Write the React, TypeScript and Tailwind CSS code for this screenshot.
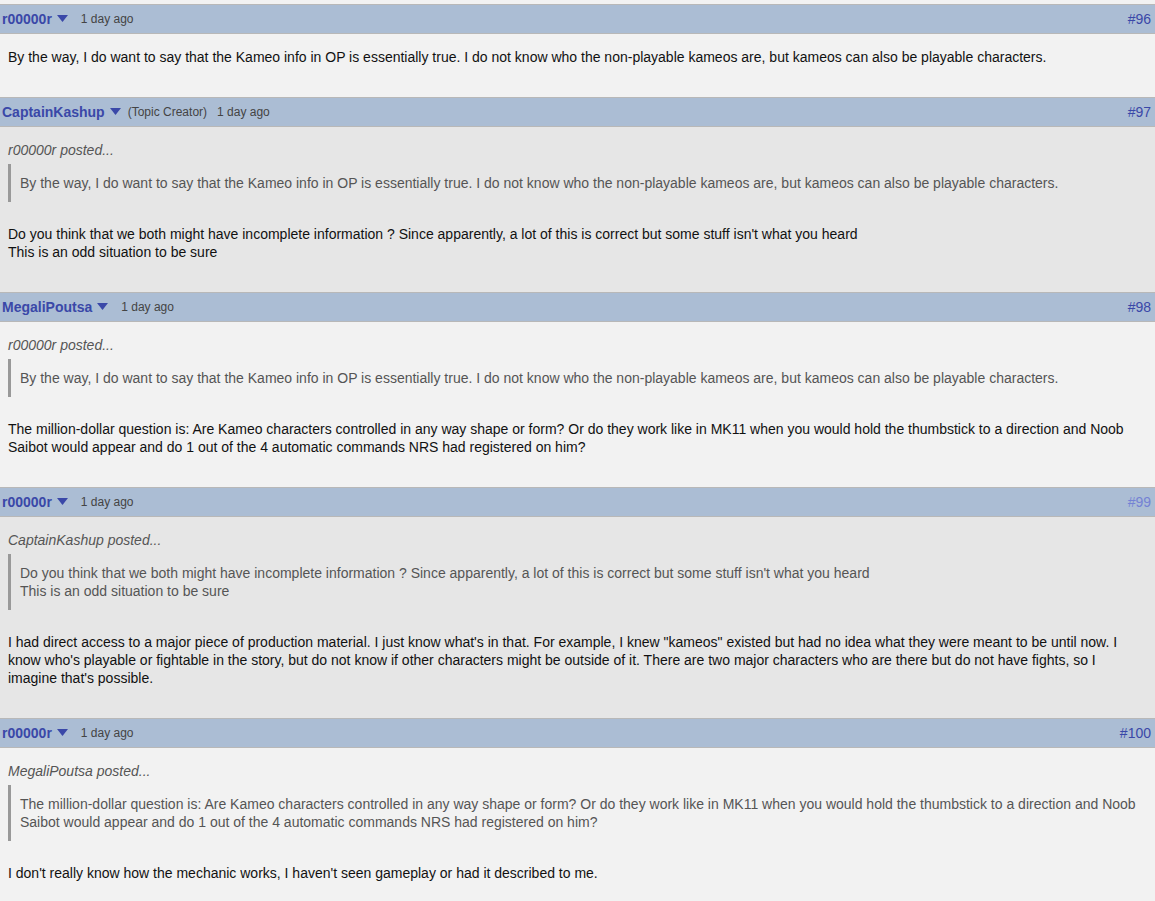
import React from 'react';

type Quote = { author: string; lines: string[] };

type Post = {
  id: number;
  user: string;
  creator?: boolean;
  ago: string;
  quote?: Quote;
  text: string[];
  visited?: boolean;
};

const posts: Post[] = [
  {
    id: 96,
    user: 'r00000r',
    ago: '1 day ago',
    text: [
      'By the way, I do want to say that the Kameo info in OP is essentially true. I do not know who the non-playable kameos are, but kameos can also be playable characters.',
    ],
  },
  {
    id: 97,
    user: 'CaptainKashup',
    creator: true,
    ago: '1 day ago',
    quote: {
      author: 'r00000r',
      lines: [
        'By the way, I do want to say that the Kameo info in OP is essentially true. I do not know who the non-playable kameos are, but kameos can also be playable characters.',
      ],
    },
    text: [
      "Do you think that we both might have incomplete information ? Since apparently, a lot of this is correct but some stuff isn't what you heard",
      'This is an odd situation to be sure',
    ],
  },
  {
    id: 98,
    user: 'MegaliPoutsa',
    ago: '1 day ago',
    quote: {
      author: 'r00000r',
      lines: [
        'By the way, I do want to say that the Kameo info in OP is essentially true. I do not know who the non-playable kameos are, but kameos can also be playable characters.',
      ],
    },
    text: [
      'The million-dollar question is: Are Kameo characters controlled in any way shape or form? Or do they work like in MK11 when you would hold the thumbstick to a direction and Noob Saibot would appear and do 1 out of the 4 automatic commands NRS had registered on him?',
    ],
  },
  {
    id: 99,
    user: 'r00000r',
    ago: '1 day ago',
    visited: true,
    quote: {
      author: 'CaptainKashup',
      lines: [
        "Do you think that we both might have incomplete information ? Since apparently, a lot of this is correct but some stuff isn't what you heard",
        'This is an odd situation to be sure',
      ],
    },
    text: [
      'I had direct access to a major piece of production material. I just know what\'s in that. For example, I knew "kameos" existed but had no idea what they were meant to be until now. I know who\'s playable or fightable in the story, but do not know if other characters might be outside of it. There are two major characters who are there but do not have fights, so I imagine that\'s possible.',
    ],
  },
  {
    id: 100,
    user: 'r00000r',
    ago: '1 day ago',
    quote: {
      author: 'MegaliPoutsa',
      lines: [
        'The million-dollar question is: Are Kameo characters controlled in any way shape or form? Or do they work like in MK11 when you would hold the thumbstick to a direction and Noob Saibot would appear and do 1 out of the 4 automatic commands NRS had registered on him?',
      ],
    },
    text: [
      "I don't really know how the mechanic works, I haven't seen gameplay or had it described to me.",
    ],
  },
];

const Caret = () => (
  <svg width="11" height="7" viewBox="0 0 11 7" className="ml-[5px] mt-[-2px]">
    <path d="M0 0 H11 L5.5 7 Z" fill="#3a48a8" />
  </svg>
);

const PostHeader: React.FC<{ post: Post }> = ({ post }) => (
  <div className="flex h-[30px] items-center border-y border-[#b8b8b8] bg-[#abbdd4] pl-[2px] pr-[4px]">
    <span className="text-[14px] font-bold text-[#3a48a8]">{post.user}</span>
    <Caret />
    {post.creator && <span className="ml-[7px] text-[12px] text-[#444]">(Topic Creator)</span>}
    <span className={`${post.creator ? 'ml-[10px]' : 'ml-[13px]'} text-[12px] text-[#444]`}>{post.ago}</span>
    <span className={`ml-auto text-[14px] ${post.visited ? 'text-[#7482d4]' : 'text-[#3a48a8]'}`}>#{post.id}</span>
  </div>
);

const PostBody: React.FC<{ post: Post; shade: boolean }> = ({ post, shade }) => (
  <div className={`px-2 pt-[14px] pb-[31px] text-[14px] leading-[18px] ${shade ? 'bg-[#e6e6e6]' : 'bg-[#f2f2f2]'}`}>
    {post.quote && (
      <>
        <div className="italic text-[#555]">{post.quote.author} posted...</div>
        <div className="mt-[5px] mb-[23px] border-l-[3px] border-[#999] py-[10px] pl-[9px] pr-2 text-[#555]">
          {post.quote.lines.map((l, i) => (
            <div key={i}>{l}</div>
          ))}
        </div>
      </>
    )}
    {post.text.map((l, i) => (
      <div key={i} className="text-[#111]">
        {l}
      </div>
    ))}
  </div>
);

export default function App() {
  return (
    <div className="min-h-screen bg-[#f2f2f2] font-['Liberation_Sans',Arial,sans-serif]">
      {/* tail of the previous post */}
      <div className="h-[4px]" />
      {posts.map((post, i) => (
        <div key={post.id}>
          <PostHeader post={post} />
          <PostBody post={post} shade={i % 2 === 1} />
        </div>
      ))}
    </div>
  );
}
